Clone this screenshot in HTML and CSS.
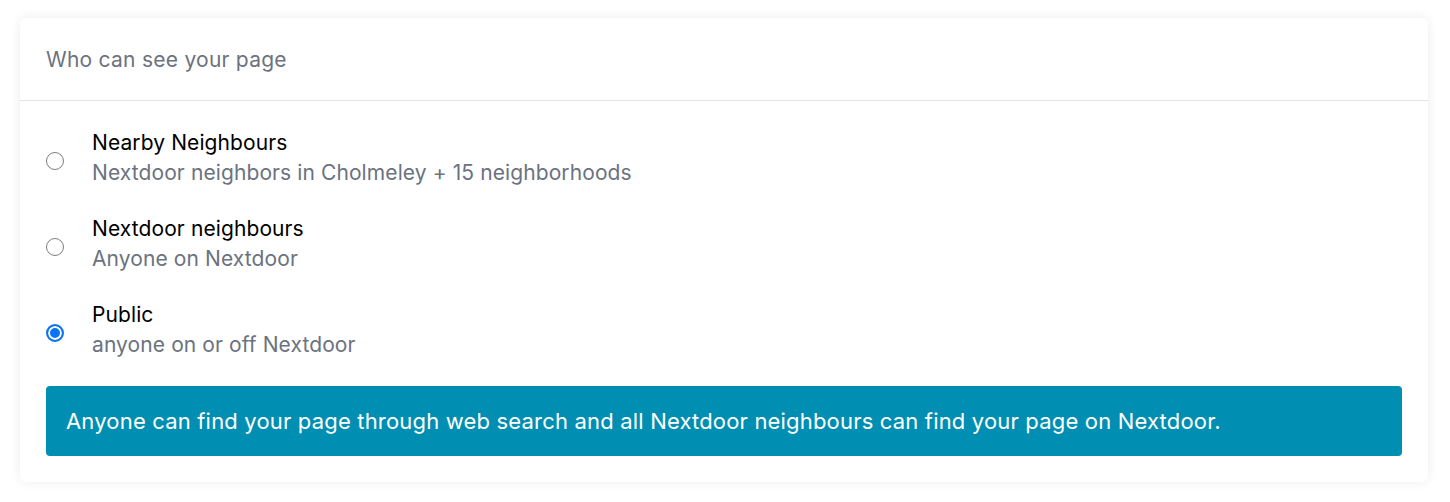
FILE: index.html
```html
<!DOCTYPE html>
<html>
<head>
    <title>Page visibility</title>
    <meta charset="UTF-8">
    <link rel="stylesheet" href="styles.css">
</head>
<body>
    <div class="card">
        <div class="card-header">Who can see your page</div>
        <div class="card-body">
            <label class="option">
                <input type="radio" name="visibility" value="nearby">
                <span class="option-text">
                    <span class="option-title">Nearby Neighbours</span>
                    <span class="option-desc">Nextdoor neighbors in Cholmeley + 15 neighborhoods</span>
                </span>
            </label>
            <label class="option">
                <input type="radio" name="visibility" value="nextdoor">
                <span class="option-text">
                    <span class="option-title">Nextdoor neighbours</span>
                    <span class="option-desc">Anyone on Nextdoor</span>
                </span>
            </label>
            <label class="option">
                <input type="radio" name="visibility" value="public" checked>
                <span class="option-text">
                    <span class="option-title">Public</span>
                    <span class="option-desc">anyone on or off Nextdoor</span>
                </span>
            </label>
            <!-- info box for the selected option -->
            <div class="alert">Anyone can find your page through web search and all Nextdoor neighbours can find your page on Nextdoor.</div>
        </div>
    </div>
</body>
</html>
```

FILE: styles.css
```css
body {
    margin: 0;
    padding: 18px 22px 20px 20px;
    background-color: #ffffff;
    font-family: Inter, "Noto Sans", sans-serif;
    letter-spacing: 0.1px;
}

.card {
    background-color: #fff;
    border-radius: 6px;
    box-shadow: 0 0 12px rgba(0, 0, 0, 0.08);
}

.card-header {
    height: 83px;
    box-sizing: border-box;
    padding: 0 26px;
    display: flex;
    align-items: center;
    font-size: 21px;
    letter-spacing: 0.25px;
    color: #6b7280;
    border-bottom: 1px solid #e3e4e6;
}

.card-body {
    padding: 27px 26px 26px 26px;
    display: flex;
    flex-direction: column;
    gap: 26px;
}

.option {
    display: flex;
    align-items: center;
    gap: 28px;
    cursor: pointer;
}

.option input[type="radio"] {
    appearance: none;
    -webkit-appearance: none;
    margin: 5px 0 0 0;
    width: 18px;
    height: 18px;
    border: 1px solid #7d7d7d;
    border-radius: 50%;
    background-color: #fff;
    flex-shrink: 0;
    box-sizing: border-box;
}

.option input[type="radio"]:checked {
    border: 2px solid #0a74f5;
    box-shadow: inset 0 0 0 2px #fff;
    background-color: #0a74f5;
}

.option-text {
    display: flex;
    flex-direction: column;
    font-size: 21px;
    line-height: 30px;
}

.option-title {
    color: #000;
}

.option-desc {
    color: #6b7280;
}

/* 提示框 */
.alert {
    height: 70px;
    box-sizing: border-box;
    padding: 0 20px;
    display: flex;
    align-items: center;
    background-color: #008fb2;
    color: #fff;
    border-radius: 4px;
    font-size: 22px;
    letter-spacing: 0.18px;
}
```
